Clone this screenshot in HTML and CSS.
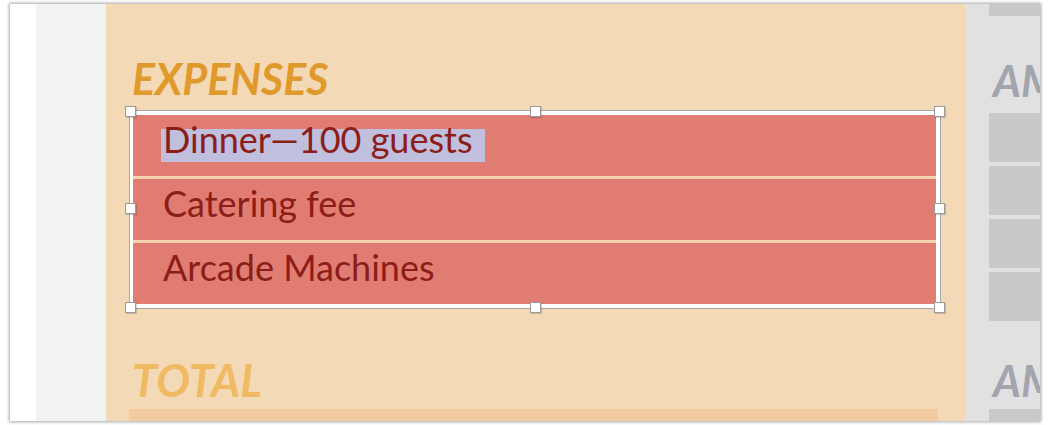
FILE: index.html
```html
<!DOCTYPE html>
<html>
<head>
<meta charset="utf-8">
<link rel="stylesheet" href="styles.css">
</head>
<body>
<div class="window">
  <div class="strip-white"></div>
  <div class="strip-gray"></div>
  <div class="sheet">
    <h2 class="heading expenses">EXPENSES</h2>
    <div class="frame">
      <div class="rows">
        <div class="row"><span class="sel">Dinner—100 guests</span></div>
        <div class="row">Catering fee</div>
        <div class="row">Arcade Machines</div>
      </div>
      <span class="handle h-tl"></span>
      <span class="handle h-tm"></span>
      <span class="handle h-tr"></span>
      <span class="handle h-ml"></span>
      <span class="handle h-mr"></span>
      <span class="handle h-bl"></span>
      <span class="handle h-bm"></span>
      <span class="handle h-br"></span>
    </div>
    <h2 class="heading total">TOTAL</h2>
    <div class="total-bar"></div>
  </div>
  <div class="side">
    <div class="side-inner">
      <div class="blk blk-top"></div>
      <div class="am am-1">AM</div>
      <div class="blk-list">
        <div class="blk"></div>
        <div class="blk"></div>
        <div class="blk"></div>
        <div class="blk"></div>
      </div>
      <div class="am am-2">AM</div>
      <div class="blk blk-bottom"></div>
    </div>
  </div>
</div>
</body>
</html>
```

FILE: styles.css
```css
html, body {
  margin: 0;
  padding: 0;
  background: #ffffff;
  width: 1050px;
  height: 425px;
  overflow: hidden;
}
body {
  padding: 4px 0 0 10px;
  box-sizing: border-box;
}
.window {
  width: 1030px;
  height: 417px;
  display: flex;
  overflow: hidden;
  box-shadow: 0 0 3px 1px rgba(0,0,0,0.35);
  font-family: Lato, "Open Sans", sans-serif;
}
.strip-white {
  width: 26px;
  background: #ffffff;
  flex: none;
}
.strip-gray {
  width: 70px;
  background: #f1f2f2;
  flex: none;
}
.sheet {
  width: 859px;
  flex: none;
  background: #f4d9b7;
  padding: 0 0 0 23px;
  box-sizing: border-box;
  display: flex;
  flex-direction: column;
}
.sheet > * {
  flex: none;
}
.heading {
  margin: 0;
  font-weight: 700;
  font-style: italic;
  padding-left: 3px;
}
.expenses {
  color: #e09a2b;
  font-size: 43px;
  line-height: 44px;
  margin-top: 53px;
  margin-bottom: 9px;
}
.total {
  color: #f0ba62;
  font-size: 45px;
  line-height: 46px;
  margin-top: 48px;
  margin-bottom: 6px;
}
.frame {
  position: relative;
  width: 812px;
  height: 199px;
  box-sizing: border-box;
  border: 1px solid #a8a8a8;
  background: #ffffff;
  padding: 4px 4px 4px 3px;
}
.rows {
  height: 100%;
  display: flex;
  flex-direction: column;
  gap: 3px;
  background: #f6d4ad;
}
.row {
  flex: 1;
  position: relative;
  z-index: 0;
  background: #e07c71;
  color: #8c1d18;
  font-size: 36px;
  line-height: 36px;
  padding: 6px 0 0 30px;
  box-sizing: border-box;
}
.sel {
  position: relative;
}
.sel::before {
  content: "";
  position: absolute;
  left: -2px;
  right: -12px;
  top: 12px;
  height: 33px;
  background: #c0bfdd;
  z-index: -1;
}
.handle {
  position: absolute;
  width: 9px;
  height: 9px;
  background: #ffffff;
  border: 1px solid #9a9a9a;
  box-shadow: 1px 1px 1px rgba(0,0,0,0.15);
}
.h-tl { left: -5px; top: -5px; }
.h-tm { left: 400px; top: -5px; }
.h-tr { right: -5px; top: -5px; }
.h-ml { left: -5px; top: 92px; }
.h-mr { right: -5px; top: 92px; }
.h-bl { left: -5px; bottom: -5px; }
.h-bm { left: 400px; bottom: -5px; }
.h-br { right: -5px; bottom: -5px; }
.total-bar {
  width: 809px;
  height: 20px;
  background: #f2cba0;
}
.side {
  flex: 1;
  background: #e1e1e1;
  padding-left: 24px;
  overflow: hidden;
}
.side-inner {
  display: flex;
  flex-direction: column;
}
.side-inner > * {
  flex: none;
}
.blk {
  background: #c9c9c9;
  height: 49px;
}
.blk-top {
  height: 12px;
}
.blk-list {
  display: flex;
  flex-direction: column;
  gap: 4px;
}
.am {
  color: #a2a4ae;
  font-weight: 700;
  font-style: italic;
  font-size: 43px;
  line-height: 44px;
  padding-left: 4px;
  white-space: nowrap;
}
.am-1 {
  margin-top: 43px;
  margin-bottom: 10px;
}
.am-2 {
  margin-top: 38px;
  margin-bottom: 6px;
}
.blk-bottom {
  height: 20px;
}
```
